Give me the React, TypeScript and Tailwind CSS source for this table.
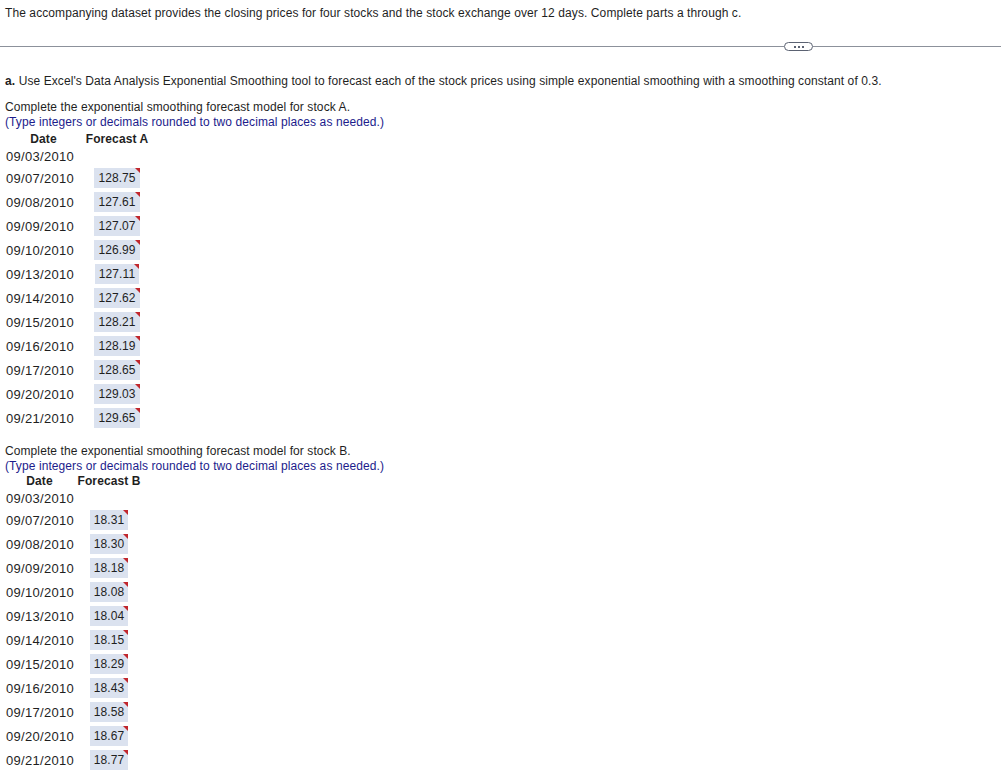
import React from "react";

const dates = [
  "09/07/2010",
  "09/08/2010",
  "09/09/2010",
  "09/10/2010",
  "09/13/2010",
  "09/14/2010",
  "09/15/2010",
  "09/16/2010",
  "09/17/2010",
  "09/20/2010",
  "09/21/2010",
];

const stockA = ["128.75", "127.61", "127.07", "126.99", "127.11", "127.62", "128.21", "128.19", "128.65", "129.03", "129.65"];
const stockB = ["18.31", "18.30", "18.18", "18.08", "18.04", "18.15", "18.29", "18.43", "18.58", "18.67", "18.77"];

const AnswerBox = ({ value }: { value: string }) => (
  <span className="relative inline-flex h-[20px] items-center bg-[#dbe2ef] px-[4px] text-[12px] text-[#1f1f1f]">
    {value}
    <span className="absolute right-0 top-0 h-0 w-0 border-l-[5px] border-t-[5px] border-l-transparent border-t-[#c1272d]" />
  </span>
);

const ForecastTable = ({
  label,
  values,
  col1,
  col2,
}: {
  label: string;
  values: string[];
  col1: string;
  col2: string;
}) => (
  <div className="text-[#1f1f1f]">
    <div className="flex h-[15px] items-center font-bold leading-[15px]">
      <div className={`${col1} text-center`}>Date</div>
      <div className={`${col2} text-center`}>Forecast {label}</div>
    </div>
    <div className="flex h-[19px] items-center">
      <div className={`${col1} pl-[1px] text-[13px] tracking-[0.3px]`}>09/03/2010</div>
    </div>
    {dates.map((d, i) => (
      <div key={d} className="flex h-[24px] items-center">
        <div className={`${col1} pl-[1px] text-[13px] tracking-[0.3px]`}>{d}</div>
        <div className={`${col2} flex justify-center`}>
          <AnswerBox value={values[i]} />
        </div>
      </div>
    ))}
  </div>
);

export default function App() {
  return (
    <div className="min-h-[771px] bg-white font-['Liberation_Sans',Arial,sans-serif] text-[12px] leading-[15px] text-[#1f1f1f]">
      <p className="px-[5px] pt-[6px] tracking-[0.09px]">
        The accompanying dataset provides the closing prices for four stocks and the stock exchange over 12 days. Complete parts a through c.
      </p>

      <div className="mt-[21px] flex h-[9px] items-center">
        <div className="h-px w-[784px] bg-[#8c919b]" />
        <button className="flex h-[9px] w-[29px] items-center justify-center gap-[2px] rounded-full border border-[#5b6272] bg-white">
          <span className="h-[2px] w-[2px] bg-[#5b6272]" />
          <span className="h-[2px] w-[2px] bg-[#5b6272]" />
          <span className="h-[2px] w-[2px] bg-[#5b6272]" />
        </button>
        <div className="h-px flex-1 bg-[#8c919b]" />
      </div>

      <div className="px-[5px] tracking-[0.09px]">
        <p className="mt-[23px]">
          <span className="font-bold">a.</span> Use Excel's Data Analysis Exponential Smoothing tool to forecast each of the stock prices using simple exponential smoothing with a smoothing constant of 0.3.
        </p>

        <p className="mt-[11px]">Complete the exponential smoothing forecast model for stock A.</p>
        <p className="text-[#1c1c8c]">(Type integers or decimals rounded to two decimal places as needed.)</p>
        <div className="pt-[2px]">
          <ForecastTable label="A" values={stockA} col1="w-[77px]" col2="w-[70px]" />
        </div>

        <p className="mt-[14px]">Complete the exponential smoothing forecast model for stock B.</p>
        <p className="text-[#1c1c8c]">(Type integers or decimals rounded to two decimal places as needed.)</p>
        <ForecastTable label="B" values={stockB} col1="w-[69px]" col2="w-[70px]" />
      </div>
    </div>
  );
}
